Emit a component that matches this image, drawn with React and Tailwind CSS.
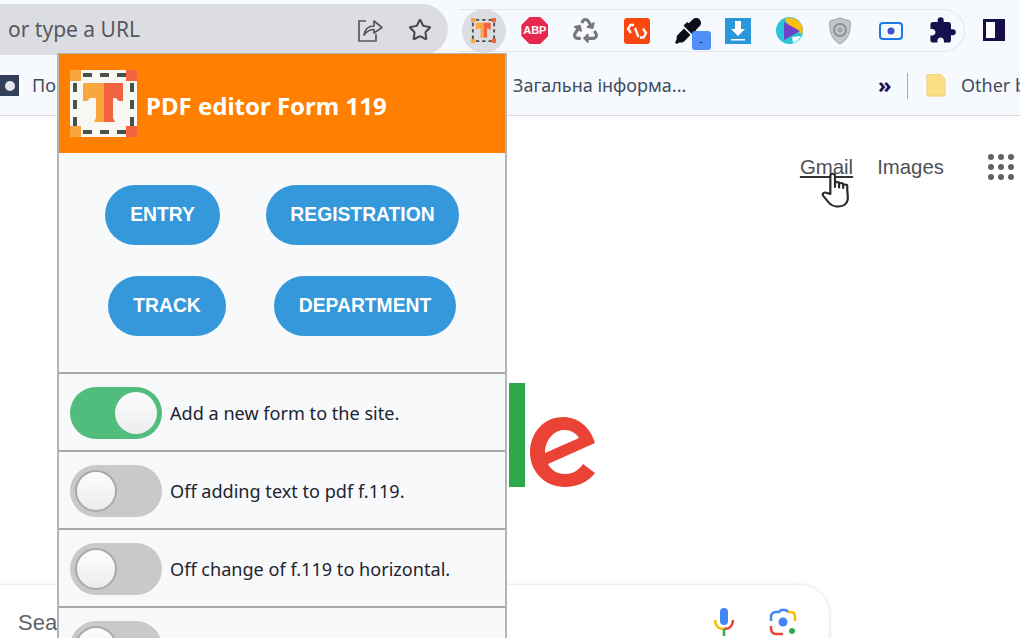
import { Star } from "lucide-react";
import { FaRecycle, FaEyeDropper } from "react-icons/fa";
import { MdExtension } from "react-icons/md";

const uiFont = "font-['Noto_Sans',sans-serif]";

function FormLogo({ size, dashWidth = 4, plain = false }) {
  return (
    <svg width={size} height={size} viewBox="0 0 67 67" className="shrink-0">
      {!plain && <rect x="0" y="0" width="67" height="67" fill="#f8f7f4" />}
      <g stroke="#46534a" strokeWidth={dashWidth} strokeDasharray="9 8">
        <path d="M13 5H56" />
        <path d="M13 62H56" />
        <path d="M5 13V56" />
        <path d="M62 13V56" />
      </g>
      <rect x="0" y="0" width="11" height="11" fill="#f9a63e" />
      <rect x="56" y="0" width="11" height="11" fill="#f2643f" />
      <rect x="0" y="56" width="11" height="11" fill="#f9a63e" />
      <rect x="56" y="56" width="11" height="11" fill="#f2643f" />
      <path d="M13 13H34V52H24L26 48V28H20L17 31H13Z" fill="#f9a63e" />
      <path d="M34 13H53V31H49L46 28H43V48L45 52H34Z" fill="#f2643f" />
    </svg>
  );
}

function ShareIcon() {
  return (
    <svg width="26" height="26" viewBox="0 0 26 26" fill="none" stroke="#55585c" strokeWidth="1.7">
      <path d="M9 4H2V24H19V17" />
      <path d="M7 18C8 12 12 9 17 9V4L25 10.5L17 16V12.5C13 12.5 10 14 7 18Z" strokeLinejoin="round" />
    </svg>
  );
}

function AbpIcon() {
  return (
    <div className="flex h-[27px] w-[27px] items-center justify-center bg-[#e8274f] [clip-path:polygon(30%_0,70%_0,100%_30%,100%_70%,70%_100%,30%_100%,0_70%,0_30%)]">
      <span className="font-['Liberation_Sans',sans-serif] text-[11px] font-bold leading-none text-white">ABP</span>
    </div>
  );
}

function CodeIcon() {
  return (
    <svg width="26" height="26" viewBox="0 0 26 26">
      <rect width="26" height="26" rx="3" fill="#f9470f" />
      <path d="M10 7H6.5L4 11L7 15M11 10L14.5 19M19 10.5L22 15L19.5 19.5H16" fill="none" stroke="#fff" strokeWidth="2.3" />
    </svg>
  );
}

function DownloadIcon() {
  return (
    <svg width="26" height="26" viewBox="0 0 26 26">
      <rect width="26" height="26" fill="#2a97d8" />
      <path d="M10 3H16V11H20L13 18L6 11H10Z" fill="#fff" />
      <rect x="6" y="21" width="14" height="1.5" fill="#fff" />
    </svg>
  );
}

function PlayIcon() {
  return (
    <svg width="27" height="27" viewBox="0 0 27 27">
      <circle cx="13.5" cy="13.5" r="13.5" fill="#2ac4d6" />
      <path d="M9 1.5A13.5 13.5 0 0 1 27 13.5L25 17L12 8Z" fill="#fbbf14" />
      <path d="M16 20L25 19A13.5 13.5 0 0 1 17 26Z" fill="#f6f9fe" />
      <path d="M8 5L24 14L8 23Z" fill="#6b44c9" />
    </svg>
  );
}

function ShieldIcon() {
  return (
    <svg width="24" height="28" viewBox="0 0 24 28">
      <path d="M12 1L22 4C23.5 14 20 23 12 27C4 23 .5 14 2 4Z" fill="#c3c6cb" stroke="#9fa3a9" />
      <circle cx="12" cy="13" r="6" fill="none" stroke="#8d9197" strokeWidth="2" />
      <circle cx="12" cy="13" r="2.5" fill="#a3a6ab" />
    </svg>
  );
}

function CameraIcon() {
  return (
    <svg width="24" height="22" viewBox="0 0 24 22">
      <rect x="1" y="3" width="22" height="16" rx="3" fill="none" stroke="#1a7ae8" strokeWidth="2" />
      <circle cx="12" cy="11" r="3.5" fill="#3f51c5" />
    </svg>
  );
}

function SidebarIcon() {
  return (
    <div className="h-[22px] w-[22px] shrink-0 border-y-[3px] border-l-[3px] border-r-[10px] border-[#17104a] bg-white" />
  );
}

function GoogleLe() {
  return (
    <div className="flex items-end gap-[5px]">
      <div className="h-[104px] w-[16px] bg-[#2ba84a]" />
      <svg width="67" height="70" viewBox="0 0 67 70">
        <path
          d="M65 26C60 9 47 0 33 0C14 0 0 16 0 35C0 55 15 70 35 70C47 70 58 65 65 56L53 47C48 54 42 57 35 57C27 57 21 53 18 47ZM15 36C15 23 24 13 34 13C41 13 46 16 49 21Z"
          fill="#ea4335"
          fillRule="evenodd"
        />
      </svg>
    </div>
  );
}

function MicIcon() {
  return (
    <svg width="22" height="30" viewBox="0 0 22 30" fill="none">
      <rect x="7" y="1" width="8" height="17" rx="4" fill="#4285f4" />
      <path d="M2 13C2 18 5 22 11 22" stroke="#fbbc04" strokeWidth="2.5" />
      <path d="M20 13C20 18 17 22 11 22" stroke="#ea4335" strokeWidth="2.5" />
      <path d="M11 22V29" stroke="#34a853" strokeWidth="2.5" />
    </svg>
  );
}

function LensIcon() {
  return (
    <svg width="28" height="28" viewBox="0 0 28 28" fill="none">
      <path d="M2 13V9C2 6 4 4 7 4H10L12 2H17L19 4" stroke="#4285f4" strokeWidth="2.5" />
      <path d="M19 4H22C25 4 26 6 26 9V13" stroke="#fbbc04" strokeWidth="2.5" />
      <path d="M2 18V20C2 24 4 26 7 26H14" stroke="#ea4335" strokeWidth="2.5" />
      <circle cx="14" cy="14" r="4.5" fill="#4285f4" />
      <circle cx="23" cy="23" r="3" fill="#34a853" />
    </svg>
  );
}

function HandCursor() {
  return (
    <svg width="28" height="36" viewBox="0 0 24 36" preserveAspectRatio="none" fill="#fff" stroke="#2a2a2a" strokeWidth="1.9" strokeLinejoin="round">
      <path d="M8 22V4C8 1 12 1 12 4V15V11.5C12 9.5 15.5 9.5 15.5 11.5V15.5V12.5C15.5 10.5 19 10.5 19 12.5V16V14C19 12 22.5 12 22.5 14V18C23 25 24 30 20 33C16 35.5 10 35 7 31L2 24C0.5 21.5 3 19.5 5 21Z" />
    </svg>
  );
}

function Toggle({ on }) {
  return (
    <div
      className={`flex h-[52px] w-[92px] shrink-0 items-center rounded-full px-[5px] ${
        on ? "justify-end bg-[#51bd7c]" : "justify-start bg-[#c9c9c9]"
      }`}
    >
      <div
        className={`h-[42px] w-[42px] rounded-full bg-gradient-to-b from-[#fdfdfd] to-[#ececec] ${
          on ? "" : "border-2 border-[#a9a9a9]"
        }`}
      />
    </div>
  );
}

function PillButton({ label, width }) {
  return (
    <button
      className={`flex h-[60px] items-center justify-center rounded-full bg-[#3498db] font-['Liberation_Sans',sans-serif] text-[19.3px] font-bold text-white ${width}`}
    >
      {label}
    </button>
  );
}

const toggles = [
  { on: true, label: "Add a new form to the site." },
  { on: false, label: "Off adding text to pdf f.119." },
  { on: false, label: "Off change of f.119 to horizontal." },
  { on: false, label: "" },
];

export default function App() {
  return (
    <div className={`relative flex h-[638px] w-[1020px] flex-col overflow-hidden bg-white ${uiFont}`}>
      {/* TOOLBAR */}
      <div className="flex h-[56px] shrink-0 items-start bg-[#f6f9fe]">
        <div className="mt-[4px] flex h-[51px] w-[448px] shrink-0 items-center overflow-hidden rounded-r-full bg-[#dcdde2] pr-[16px]">
          <span className="ml-[8px] mt-[1px] text-[21px] text-[#55585e]">or type a URL</span>
          <div className="ml-auto flex items-center gap-[25px]">
            <ShareIcon />
            <Star size={24} strokeWidth={2} color="#44474b" />
          </div>
        </div>

        <div className="ml-[11px] mt-[9px] flex h-[43px] w-[506px] shrink-0 items-center gap-[21px] rounded-r-full border border-l-0 border-[#e3e6ec] pl-[10px] pr-[7px]">
          <div className="relative flex h-[30px] w-[30px] items-center justify-center">
            <div className="absolute -inset-[7px] rounded-full bg-[#dcdde2]" />
            <div className="relative">
              <FormLogo size={25} dashWidth={5} plain />
            </div>
          </div>
          <div className="flex h-[30px] w-[30px] items-center justify-center"><AbpIcon /></div>
          <div className="flex h-[30px] w-[30px] items-center justify-center"><FaRecycle size={25} color="#777777" /></div>
          <div className="flex h-[30px] w-[30px] items-center justify-center"><CodeIcon /></div>
          <div className="relative flex h-[30px] w-[30px] items-center justify-center">
            <FaEyeDropper size={26} color="#0d0d1a" />
            <div className="absolute left-[19px] top-[15px] flex h-[19px] w-[19px] items-center justify-center rounded-[3px] bg-[#4f8ff7] text-[11px] leading-none text-[#17233f]">-</div>
          </div>
          <div className="flex h-[30px] w-[30px] items-center justify-center"><DownloadIcon /></div>
          <div className="flex h-[30px] w-[30px] items-center justify-center"><PlayIcon /></div>
          <div className="flex h-[30px] w-[30px] items-center justify-center"><ShieldIcon /></div>
          <div className="flex h-[30px] w-[30px] items-center justify-center"><CameraIcon /></div>
          <div className="flex h-[30px] w-[30px] items-center justify-center"><MdExtension size={29} color="#17104a" /></div>
        </div>

        <div className="ml-[18px] mt-[19px]">
          <SidebarIcon />
        </div>
      </div>

      {/* BOOKMARKS */}
      <div className="flex h-[60px] shrink-0 items-center border-b border-[#d5d9e0] bg-[#f6f9fe] text-[18px] text-[#3f4c5e]">
        <div className="flex h-[21px] w-[19px] shrink-0 items-center justify-center bg-[#33405a]">
          <div className="h-[10px] w-[10px] rounded-full bg-[#e8e8ee]" />
        </div>
        <span className="ml-[13px] w-[40px] shrink-0">Пошук</span>
        <span className="ml-[441px] w-[180px] shrink-0 whitespace-nowrap">Загальна інформа...</span>
        <span className="ml-[185px] w-[16px] shrink-0 pb-[4px] text-[22px] font-bold leading-none text-[#17104a]">»</span>
        <div className="ml-[13px] h-[26px] w-px shrink-0 bg-[#a8adb5]" />
        <svg width="20" height="23" viewBox="0 0 20 23" className="ml-[18px] shrink-0">
          <path d="M1 0H14L19 5V22H1Z" fill="#fbdf87" stroke="#f1ce6b" />
        </svg>
        <span className="ml-[15px] whitespace-nowrap">Other b</span>
      </div>

      {/* PAGE */}
      <div className="flex min-h-0 flex-1 flex-col">
        <div className="flex h-[102px] shrink-0 items-center justify-end pr-[6px] font-['Liberation_Sans',sans-serif] text-[20.4px] text-[#4d5156]">
          <span className="underline decoration-[#333333] underline-offset-2">Gmail</span>
          <span className="ml-[24px]">Images</span>
          <div className="ml-[44px] grid grid-cols-3 gap-[4px]">
            {[0, 1, 2, 3, 4, 5, 6, 7, 8].map((dot) => (
              <div key={dot} className="h-[6px] w-[6px] rounded-full bg-[#5f6368]" />
            ))}
          </div>
        </div>

        <div className="mt-[165px] shrink-0 pl-[509px]">
          <GoogleLe />
        </div>

        <div className="mt-[97px] flex h-[76px] w-[830px] shrink-0 items-center rounded-r-[30px] border border-l-0 border-[#eceef0] pl-[18px] pr-[32px] shadow-[0_1px_4px_rgba(32,33,36,0.12)]">
          <span className="font-['Liberation_Sans',sans-serif] text-[22px] text-[#5f6368]">Search Google</span>
          <div className="ml-auto flex items-center gap-[34px]">
            <MicIcon />
            <LensIcon />
          </div>
        </div>
      </div>

      {/* POINTER OVER GMAIL LINK */}
      <div className="absolute left-[821px] top-[172px]">
        <HandCursor />
      </div>

      {/* EXTENSION POPUP */}
      <div className="absolute left-[57px] top-[53px] w-[450px] border-x-2 border-t border-[#b4b4b4] bg-[#f8f9fb]">
        <div className="flex h-[99px] items-center gap-[9px] bg-[#ff8000] pl-[11px]">
          <FormLogo size={67} />
          <span className="mt-[4px] text-[24px] font-bold text-white">PDF editor Form 119</span>
        </div>

        <div className="flex flex-col gap-[31px] pb-[36px] pt-[32px]">
          <div className="flex justify-center gap-[46px]">
            <PillButton label="ENTRY" width="w-[115px]" />
            <PillButton label="REGISTRATION" width="w-[193px]" />
          </div>
          <div className="flex justify-center gap-[48px]">
            <PillButton label="TRACK" width="w-[118px]" />
            <PillButton label="DEPARTMENT" width="w-[182px]" />
          </div>
        </div>

        {toggles.map((row, i) => (
          <div key={i} className="flex h-[78px] items-center gap-[8px] border-t-2 border-[#a8a8a8] pl-[11px] pt-[2px]">
            <Toggle on={row.on} />
            <span className="mt-[2px] text-[18.1px] text-[#1d2430]">{row.label}</span>
          </div>
        ))}
      </div>
    </div>
  );
}
